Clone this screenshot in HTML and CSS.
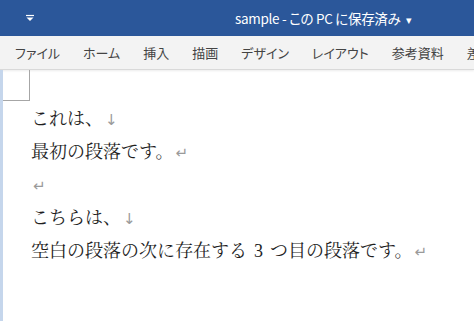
FILE: index.html
```html
<!DOCTYPE html>
<html lang="ja">
<head>
    <meta charset="UTF-8">
    <title>sample - Word</title>
    <link rel="stylesheet" href="styles.css">
</head>
<body>
    <div class="titlebar">
        <span class="qat">
            <svg width="10" height="8" viewBox="0 0 10 8">
                <path d="M1 1.5h8" stroke="#fff" stroke-width="1.2"/>
                <path d="M1.5 3.5h7L5 7z" fill="#fff"/>
            </svg>
        </span>
        <span class="title">sample - この PC に保存済み <span class="caret">▾</span></span>
    </div>

    <div class="ribbon">
        <span class="tab">ファイル</span>
        <span class="tab">ホーム</span>
        <span class="tab">挿入</span>
        <span class="tab">描画</span>
        <span class="tab">デザイン</span>
        <span class="tab">レイアウト</span>
        <span class="tab">参考資料</span>
        <span class="tab">差し込み文書</span>
    </div>

    <div class="document">
        <div class="corner"></div>
        <div class="page">
            <p>これは、<span class="mark">↓</span></p>
            <p>最初の段落です。<span class="mark">↵</span></p>
            <p><span class="mark">↵</span></p>
            <p>こちらは、<span class="mark">↓</span></p>
            <p>空白の段落の次に存在する<span class="num">3</span>つ目の段落です。<span class="mark">↵</span></p>
        </div>
    </div>
</body>
</html>
```

FILE: styles.css
```css
body {
    margin: 0;
    width: 474px;
    height: 321px;
    overflow: hidden;
    background: #fff;
    font-family: "Noto Sans CJK JP", sans-serif;
}

.titlebar {
    height: 36px;
    background: #2b579a;
    color: #fff;
    display: flex;
    align-items: center;
    padding-left: 25px;
    box-sizing: border-box;
}

.qat {
    display: flex;
    align-items: center;
    width: 10px;
    height: 10px;
}

.title {
    margin-left: 200px;
    font-size: 13.5px;
    font-feature-settings: "palt";
    letter-spacing: -0.3px;
    white-space: nowrap;
}

.caret {
    font-size: 11px;
    margin-left: 3px;
}

.ribbon {
    height: 33px;
    background: #f3f3f3;
    border-bottom: 1px solid #d9d9d9;
    display: flex;
    align-items: center;
    gap: 23px;
    padding-left: 15px;
    white-space: nowrap;
    overflow: hidden;
    font-size: 13px;
    font-feature-settings: "palt";
    color: #444;
    box-shadow: 0 1px 2px rgba(0,0,0,0.08);
}

.tab {
    flex: none;
}

.document {
    height: 251px;
    border-left: 3px solid #c5d6ec;
    position: relative;
}

.corner {
    position: absolute;
    left: 0;
    top: 0;
    width: 26px;
    height: 30px;
    border-right: 1px solid #a6a6a6;
    border-bottom: 1px solid #a6a6a6;
}

.page {
    padding: 31px 0 0 28px;
    font-family: "Noto Serif CJK JP", "Noto Sans CJK JP", serif;
    font-size: 18px;
    color: #1e1e1e;
}

.page p {
    margin: 0;
    height: 33px;
    line-height: 33px;
    white-space: nowrap;
}

.num {
    font-family: "Liberation Serif", serif;
    margin: 0 7px;
}

.mark {
    color: #9a9a9a;
    font-size: 15px;
    margin-left: 2px;
    font-family: "DejaVu Sans", sans-serif;
}
```
